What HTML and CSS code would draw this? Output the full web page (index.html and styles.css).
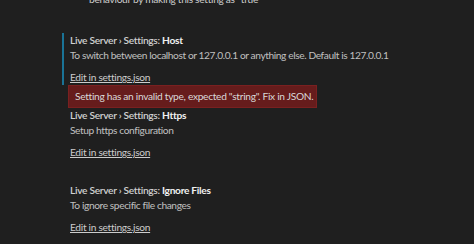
FILE: index.html
```html
<!DOCTYPE html>
<html lang="en">
<head>
  <meta charset="UTF-8" />
  <title>Settings - Live Server</title>
  <link rel="stylesheet" href="styles.css">
</head>
<body>
  <div class="settings">
    <div class="prev-desc">behaviour by making this setting as `true`</div>

    <div class="setting modified">
      <div class="setting-title">Live Server › Settings: <b>Host</b></div>
      <div class="setting-desc">To switch between localhost or 127.0.0.1 or anything else. Default is 127.0.0.1</div>
      <a class="edit-link" href="#">Edit in settings.json</a>
    </div>
    <div class="setting-error">Setting has an invalid type, expected "string". Fix in JSON.</div>

    <div class="setting after-error">
      <div class="setting-title">Live Server › Settings: <b>Https</b></div>
      <div class="setting-desc">Setup https configuration</div>
      <a class="edit-link" href="#">Edit in settings.json</a>
    </div>

    <div class="setting">
      <div class="setting-title">Live Server › Settings: <b>Ignore Files</b></div>
      <div class="setting-desc">To ignore specific file changes</div>
      <a class="edit-link" href="#">Edit in settings.json</a>
    </div>
  </div>
</body>
</html>
```

FILE: styles.css
```css
* {
  margin: 0;
  padding: 0;
  box-sizing: border-box;
}

body {
  background: #1f1f1f;
  font-family: Lato, 'Noto Sans', sans-serif;
  font-size: 10.2px;
  letter-spacing: -0.3px;
  line-height: 15px;
  color: #c4c4c4;
  overflow: hidden;
}

.settings {
  padding-left: 62px;
}

.prev-desc {
  margin-top: -8px;
  padding-left: 27px;
  color: #cccccc;
}

.setting {
  padding-left: 8px;
  margin-top: 23px;
}

.setting.modified {
  margin-top: 26px;
  border-left: 2px solid #1a7396;
  padding-left: 6px;
}

.setting.after-error {
  margin-top: 0;
}

.setting-title {
  color: #d0d0d0;
  font-weight: 600;
}

.setting-title b {
  color: #f0f0f0;
  font-weight: 700;
}

.setting-desc {
  color: #c0c0c0;
  letter-spacing: -0.4px;
}

.edit-link {
  display: inline-block;
  margin-top: 7px;
  color: #cccccc;
  text-decoration: underline;
}

.setting-error {
  margin-left: 6px;
  width: 249px;
  height: 23px;
  line-height: 21px;
  padding-left: 6px;
  background: #661c1c;
  border: 1px solid #7a2020;
  color: #d8d8d8;
  white-space: nowrap;
}
```
